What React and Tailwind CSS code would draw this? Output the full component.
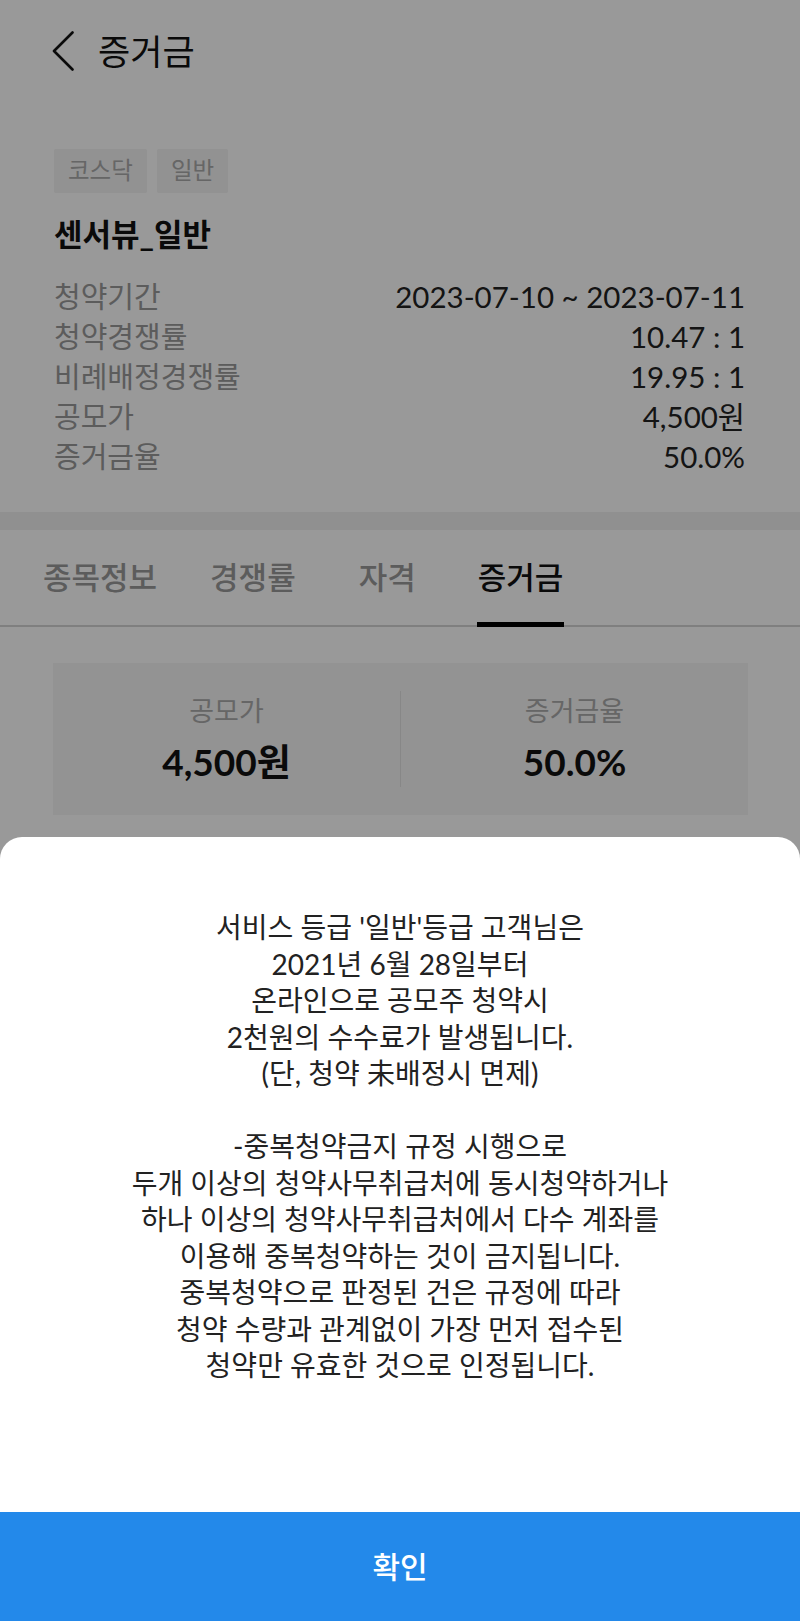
import React from "react";

const rows = [
    ["청약기간", "2023-07-10 ~ 2023-07-11"],
    ["청약경쟁률", "10.47 : 1"],
    ["비례배정경쟁률", "19.95 : 1"],
    ["공모가", "4,500원"],
    ["증거금율", "50.0%"],
];

const notice1 = [
    "서비스 등급 '일반'등급 고객님은",
    "2021년 6월 28일부터",
    "온라인으로 공모주 청약시",
    "2천원의 수수료가 발생됩니다.",
    "(단, 청약 未배정시 면제)",
];

const notice2 = [
    "-중복청약금지 규정 시행으로",
    "두개 이상의 청약사무취급처에 동시청약하거나",
    "하나 이상의 청약사무취급처에서 다수 계좌를",
    "이용해 중복청약하는 것이 금지됩니다.",
    "중복청약으로 판정된 건은 규정에 따라",
    "청약 수량과 관계없이 가장 먼저 접수된",
    "청약만 유효한 것으로 인정됩니다.",
];

function Tab({ label, active, className }) {
    return (
        <div className={"relative flex items-center " + className}>
            <span className={"text-[31px] font-medium leading-none " + (active ? "text-[#111]" : "text-[#999]")}>{label}</span>
            {active && <div className="absolute left-[-1px] right-[-1px] bottom-[-2px] h-[5px] bg-black" />}
        </div>
    );
}

export default function App() {
    return (
        <div className="relative h-[1621px] w-full overflow-hidden bg-white font-[Lato,'Noto_Sans_CJK_KR',sans-serif] text-[#222]">
            {/* header */}
            <div className="flex h-[102px] items-center gap-[24px] pl-[52px]">
                <svg width="22" height="40" viewBox="0 0 22 40" fill="none">
                    <path d="M20.5 1.5 L2 20 L20.5 38.5" stroke="#111" strokeWidth="2.6" strokeLinecap="round" strokeLinejoin="round" />
                </svg>
                <span className="text-[35px] leading-none text-[#111]">증거금</span>
            </div>

            {/* summary */}
            <div className="pl-[54px] pr-[55px] pt-[47px] pb-[35px]">
                <div className="flex gap-[10px]">
                    <span className="flex h-[44px] items-center rounded-[2px] bg-[#f3f3f3] px-[14px] text-[23.5px] text-[#aaa]">코스닥</span>
                    <span className="flex h-[44px] items-center rounded-[2px] bg-[#f3f3f3] px-[14px] text-[23.5px] text-[#aaa]">일반</span>
                </div>
                <div className="mt-[23px] text-[31px] font-bold leading-[36px] text-[#111]">센서뷰_일반</div>
                <div className="mt-[25px]">
                    {rows.map(([k, v]) => (
                        <div key={k} className="flex items-center justify-between leading-[40px]">
                            <span className="text-[29px] text-[#999]">{k}</span>
                            <span className="whitespace-pre text-[29.5px] text-[#222]">{v}</span>
                        </div>
                    ))}
                </div>
            </div>
            <div className="h-[18px] bg-[#f0f0f0]" />

            {/* tabs */}
            <div className="flex h-[97px] border-b-2 border-[#d4d4d4]">
                <Tab label="종목정보" className="ml-[43px]" />
                <Tab label="경쟁률" className="ml-[53px]" />
                <Tab label="자격" className="ml-[63px]" />
                <Tab label="증거금" active className="ml-[62px]" />
            </div>

            {/* card */}
            <div className="ml-[53px] mr-[52px] mt-[36px] flex h-[152px] bg-[#f5f5f5]">
                <div className="flex flex-1 flex-col items-center justify-center">
                    <span className="text-[27px] leading-[30px] text-[#aaa]">공모가</span>
                    <span className="mt-[16px] text-[37px] font-bold leading-[40px] text-[#111]">4,500원</span>
                </div>
                <div className="my-[28px] w-px bg-[#e2e2e2]" />
                <div className="flex flex-1 flex-col items-center justify-center">
                    <span className="text-[27px] leading-[30px] text-[#aaa]">증거금율</span>
                    <span className="mt-[16px] text-[37px] font-bold leading-[40px] text-[#111]">50.0%</span>
                </div>
            </div>

            {/* dim */}
            <div className="absolute inset-0 bg-black/40" />

            {/* bottom sheet */}
            <div className="absolute inset-x-0 bottom-0 flex h-[784px] flex-col overflow-hidden rounded-t-[22px] bg-white">
                <div className="flex-1 pt-[72px] text-center text-[28px] leading-[36.5px] text-[#222]">
                    {notice1.map((l) => (
                        <div key={l}>{l}</div>
                    ))}
                    <div className="h-[36.5px]" />
                    {notice2.map((l) => (
                        <div key={l}>{l}</div>
                    ))}
                </div>
                <button className="flex h-[109px] items-center justify-center bg-[#2389ea] text-[30px] font-medium text-white">확인</button>
            </div>
        </div>
    );
}
